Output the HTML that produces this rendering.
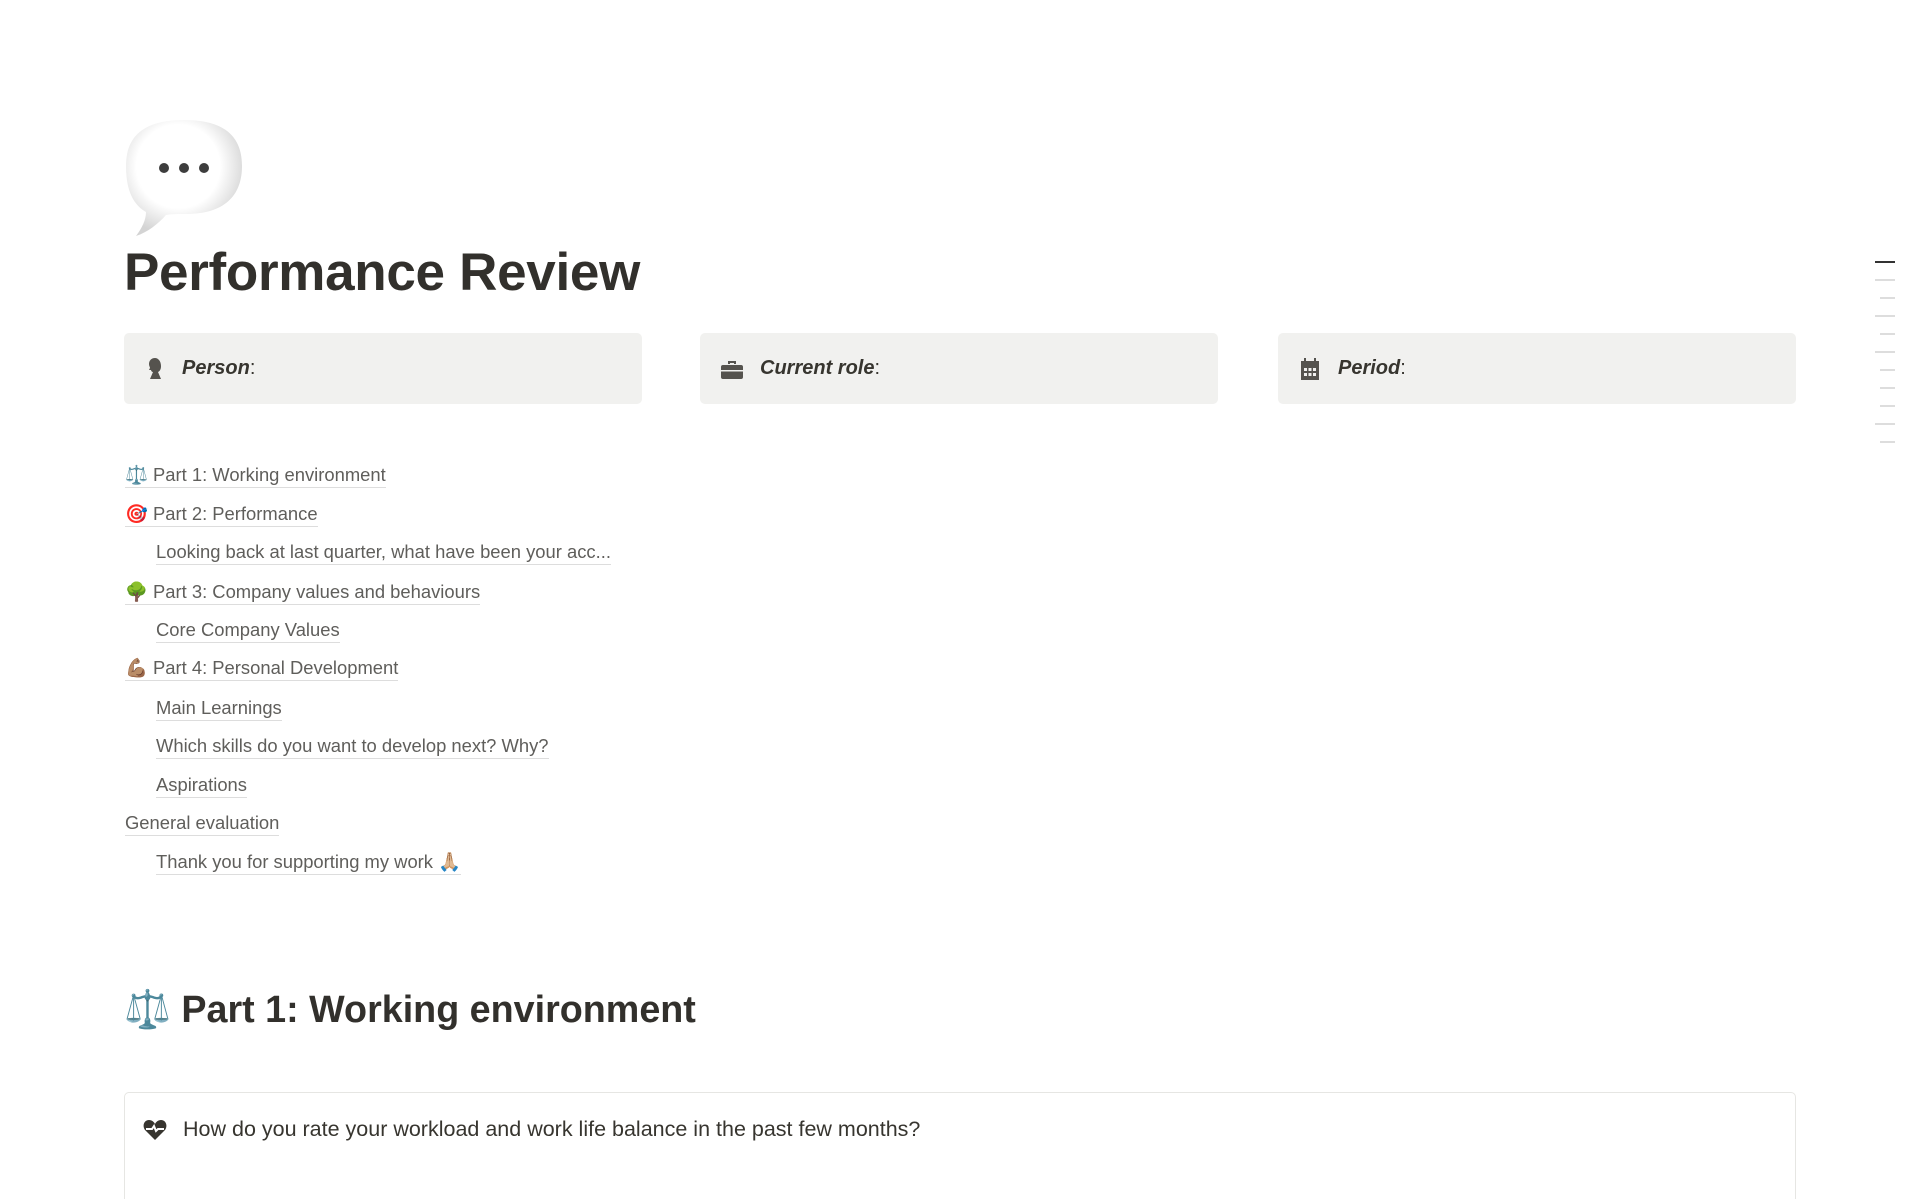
<!DOCTYPE html>
<html><head><meta charset="utf-8"><style>
*{margin:0;padding:0;box-sizing:border-box}
html,body{width:1920px;height:1199px;overflow:hidden}
body{background:#fff;font-family:"Liberation Sans","Noto Sans CJK JP",sans-serif;color:#37352f;position:relative}
.abs{position:absolute}
h1{position:absolute;left:124px;top:242px;font-size:53px;font-weight:bold;color:#32302c;letter-spacing:-0.3px}
.box{position:absolute;top:333px;width:518px;height:71px;background:#f1f1ef;border-radius:5px;display:flex;align-items:center;padding-left:20px;font-size:20px}
.box b{font-style:italic;margin-left:16px}
.toc{position:absolute;left:125px;font-size:18.4px;color:#5f5e5b}
.toc span{border-bottom:1px solid #ddd;padding-bottom:2px}
.sub{left:156px}
h2{position:absolute;left:124px;top:988px;font-size:37.7px;font-weight:bold;color:#32302c}
.callout{position:absolute;left:124px;top:1092px;width:1672px;height:107px;border:1.5px solid #e6e6e3;border-bottom:none;border-radius:5px 5px 0 0}
.mini{position:absolute;height:2px;background:#ddd}
</style></head><body>
<svg class="abs" style="left:124px;top:116px" width="122" height="122" viewBox="0 0 122 122">
<defs><radialGradient id="g" cx="0.45" cy="0.4" r="0.6"><stop offset="0.6" stop-color="#fff"/><stop offset="1" stop-color="#d4d4d4"/></radialGradient></defs>
<path d="M60 4C100 4 118 20 118 50c0 30-18 48-56 48-8 0-14 0-20 1C34 108 24 116 12 120c6-8 10-16 10-24C8 88 2 72 2 50 2 20 20 4 60 4z" fill="url(#g)"/>
<circle cx="40" cy="52" r="5" fill="#3d3d3d"/><circle cx="60" cy="52" r="5" fill="#3d3d3d"/><circle cx="80" cy="52" r="5" fill="#3d3d3d"/>
</svg>
<h1>Performance Review</h1>
<div class="box" style="left:124px"><svg width="22" height="24" viewBox="0 0 22 24"><path fill="#55534e" d="M11 1c-4 0-6 3-6 6 0 2 1 3 1 4l-1 2h2c0 1 1 2 2 2l-3 7h11l-3-7c2-1 3-3 3-6 0-5-3-8-6-8z"/></svg><b>Person</b>:</div>
<div class="box" style="left:700px"><svg width="24" height="24" viewBox="0 0 24 24"><path fill="#55534e" d="M8 4h8v3h-2V6h-4v1H8zM3 8h18a2 2 0 0 1 2 2v10a2 2 0 0 1-2 2H3a2 2 0 0 1-2-2V10a2 2 0 0 1 2-2z"/><rect x="1" y="13" width="22" height="1.5" fill="#f1f1ef"/></svg><b>Current role</b>:</div>
<div class="box" style="left:1278px"><svg width="24" height="24" viewBox="0 0 24 24"><path fill="#55534e" d="M6 1h2v3h8V1h2v3h3v19H3V4h3z"/><g fill="#f1f1ef"><rect x="6" y="11" width="3" height="3"/><rect x="10.5" y="11" width="3" height="3"/><rect x="15" y="11" width="3" height="3"/><rect x="6" y="16" width="3" height="3"/><rect x="10.5" y="16" width="3" height="3"/><rect x="15" y="16" width="3" height="3"/></g></svg><b>Period</b>:</div>

<div class="toc" style="top:464px"><span>⚖️ Part 1: Working environment</span></div>
<div class="toc" style="top:503px"><span>🎯 Part 2: Performance</span></div>
<div class="toc sub" style="top:541px"><span>Looking back at last quarter, what have been your acc... </span></div>
<div class="toc" style="top:581px"><span>🌳 Part 3: Company values and behaviours</span></div>
<div class="toc sub" style="top:619px"><span>Core Company Values</span></div>
<div class="toc" style="top:657px"><span>💪🏽 Part 4: Personal Development</span></div>
<div class="toc sub" style="top:697px"><span>Main Learnings</span></div>
<div class="toc sub" style="top:735px"><span>Which skills do you want to develop next? Why?</span></div>
<div class="toc sub" style="top:774px"><span>Aspirations</span></div>
<div class="toc" style="top:812px"><span>General evaluation</span></div>
<div class="toc sub" style="top:851px"><span>Thank you for supporting my work 🙏🏼</span></div>

<h2>⚖️ Part 1: Working environment</h2>
<div class="callout">
<svg class="abs" style="left:18px;top:26px" width="24" height="22" viewBox="0 0 24 22"><path fill="#37352f" d="M12 21 2 11C-1 7 1 1 6 1c3 0 5 2 6 4 1-2 3-4 6-4 5 0 7 6 4 10z"/><path d="M3 10h6l2-3 2 5 2-2h6" stroke="#fff" stroke-width="2" fill="none"/></svg>
<div class="abs" style="left:58px;top:24px;font-size:21.5px">How do you rate your workload and work life balance in the past few months?</div>
</div>

<div class="mini" style="left:1875px;top:261px;width:20px;background:#333"></div>
<div class="mini" style="left:1875px;top:279px;width:20px"></div>
<div class="mini" style="left:1880px;top:297px;width:15px"></div>
<div class="mini" style="left:1875px;top:315px;width:20px"></div>
<div class="mini" style="left:1880px;top:333px;width:15px"></div>
<div class="mini" style="left:1875px;top:351px;width:20px"></div>
<div class="mini" style="left:1880px;top:369px;width:15px"></div>
<div class="mini" style="left:1880px;top:387px;width:15px"></div>
<div class="mini" style="left:1880px;top:405px;width:15px"></div>
<div class="mini" style="left:1875px;top:423px;width:20px"></div>
<div class="mini" style="left:1880px;top:441px;width:15px"></div>
</body></html>
